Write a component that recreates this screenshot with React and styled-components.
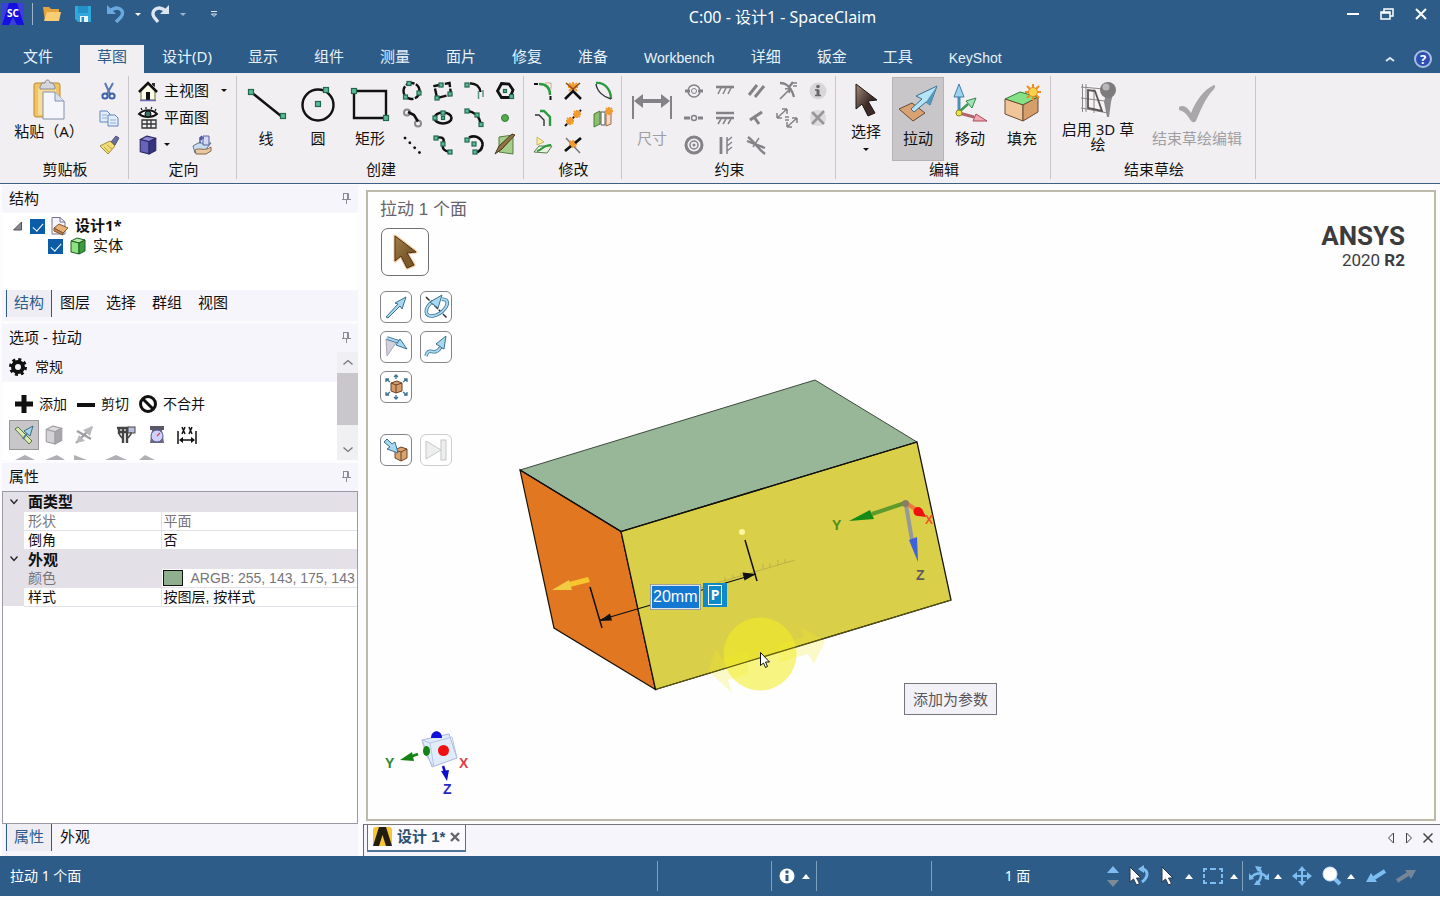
import React from "react";
import styled, { createGlobalStyle } from "styled-components";

const BLUE = "#2d5c88";
const PANEL = "#f7f5fc";
const RIBBON = "#f1eff2";

const GlobalStyle = createGlobalStyle`
  * { box-sizing: border-box; }
  body {
    margin: 0;
    background: #fcfcfe;
    color: #111;
    font-family: "Noto Sans", "Noto Sans CJK SC", sans-serif;
    font-size: 15px;
    line-height: 18px;
  }
  button {
    font: inherit;
    color: inherit;
    background: none;
    border: 0;
    padding: 0;
    display: flex;
    align-items: center;
    justify-content: center;
    white-space: nowrap;
  }
  svg { display: block; flex: none; overflow: visible; }
`;

/* ---------- icon drawing helpers ---------- */

const Icon = ({ w = 24, h = w, children, ...rest }) => (
  <svg width={w} height={h} viewBox={`0 0 ${w} ${h}`} fill="none" aria-hidden="true" {...rest}>
    {children}
  </svg>
);

const Handle = ({ x, y, s = 4 }) => (
  <rect x={x - s / 2} y={y - s / 2} width={s} height={s} fill="#5fb896" stroke="#20694f" strokeWidth="1.2" />
);

const Ink = ({ d, w = 2, c = "#111", ...rest }) => <path d={d} stroke={c} strokeWidth={w} {...rest} />;

const Caret = ({ up, color = "#111", w = 8, h = 4 }) => (
  <Icon w={w} h={h}>
    <path d={up ? `M0 ${h}L${w / 2} 0L${w} ${h}Z` : `M0 0H${w}L${w / 2} ${h}Z`} fill={color} />
  </Icon>
);

const PushPin = () => (
  <Icon w={10} h={12}>
    <Ink w={1} c="#8c8a92" d="M2.5 1V7M2.5 1.5H7.5V7.5M6.5 1.5V7.5M1 7.5H10M5.5 7.5V12" />
  </Icon>
);

const createIcons = [
  ["三点圆", <Icon><circle cx="11.5" cy="12" r="8" stroke="#111" strokeWidth="2.4" strokeDasharray="9 1.5" /><Handle x={9} y={4.5} /><Handle x={19} y={14} /><Handle x={5.5} y={18} /></Icon>],
  ["三点矩形", <Icon><Ink d="M3.5 7L18.5 4L20 15.500L6 19Z" w={2.400} strokeDasharray="9 1.500" /><Handle x={10} y={6} /><Handle x={6} y={19} /><Handle x={19} y={15} /></Icon>],
  ["切线弧", <Icon><Ink d="M8 4.500C14 4 18 8 18.500 13" w={2.400} /><Handle x={5} y={6} /><Ink c="#5c9782" w={1.500} d="M16.500 12V20M21 11V18" /></Icon>],
  ["多边形", <Icon><Ink d="M8.500 4.500L16 5L20 11L17 18.500H8.500L4.500 12Z" w={2.800} /><Handle x={12} y={12} s={3} /><Handle x={18.5} y={17.5} /></Icon>],
  ["切线", <Icon><circle cx="7" cy="6.500" r="3" stroke="#8a8a8a" strokeWidth="2" /><circle cx="18" cy="17.500" r="3" stroke="#8a8a8a" strokeWidth="2" /><Ink d="M8 6L14 9L18 15.500" w={2.600} /></Icon>],
  ["椭圆", <Icon><ellipse cx="12" cy="12" rx="8.500" ry="5.500" stroke="#111" strokeWidth="2.600" /><Handle x={12} y={12} s={3} /><Handle x={12} y={7} /><Handle x={4} y={12} /></Icon>],
  ["三点弧", <Icon><Ink d="M6 5C13 6 17.500 11 18.500 17" w={2.400} strokeDasharray="8 2" /><Handle x={5} y={5} /><Handle x={15} y={9} /><Handle x={19} y={18.500} /></Icon>],
  ["点", <Icon><circle cx="12" cy="12" r="3.500" fill="#55ab4c" stroke="#327d3b" /></Icon>],
  ["构造线", <Icon><Ink d="M5 5L20 20" w={2.800} strokeDasharray="0.1 6.700" strokeLinecap="round" /></Icon>],
  ["样条曲线", <Icon><Ink d="M5 5C12 3 14 6 12 11C11 16 13 18 19 19" w={2.400} /><Handle x={5} y={5} /><Handle x={12} y={11} /><Handle x={19} y={19} /></Icon>],
  ["扫掠弧", <Icon><Ink d="M7 4.500C15 1 21 7 20.500 12C20 16 18 19 13 19.500" w={2.600} /><Handle x={5} y={7} /><Handle x={12} y={11} /><Handle x={13} y={19} /></Icon>],
  ["面曲线", <Icon><path d="M6 4L20 2V21L6 19Z" fill="#a5ce8b" stroke="#567b43" /><path d="M22 2L9 16L2 21L6 13L19 1Z" fill="#8f7246" stroke="#463920" /></Icon>],
];

const Spark = ({ x, y, r = 4 }) => (
  <path
    d={`M${x - r} ${y}H${x + r}M${x} ${y - r}V${y + r}M${x - r + 1} ${y - r + 1}L${x + r - 1} ${y + r - 1}M${x - r + 1} ${y + r - 1}L${x + r - 1} ${y - r + 1}`}
    stroke="#f29b2e"
    strokeWidth="2"
  />
);

const modifyIcons = [
  ["圆角", <Icon><Ink c="#2b9a3e" w={2.400} d="M8 5C15 5 19 9 19 16" /><Ink d="M3 5H7M19.500 17V21" w={2} /><Ink c="#c9a793" w={1} d="M14 4H20V10" /></Icon>],
  ["修剪", <Icon><Spark x={12} y={8} r={5} /><Ink c="#8c4a18" w={1.500} d="M5 4L12 10L19 4" /><Ink d="M4 20L12 12L20 20" w={2.600} /></Icon>],
  ["弯曲", <Icon><Ink c="#2b9a3e" w={2.400} d="M5 4C14 3 20 11 20 20" /><Ink c="#333" w={1.400} d="M5 5C6 12 12 18 20 20" /></Icon>],
  ["偏移", <Icon><Ink c="#2b9a3e" w={2.400} d="M9 5H13L19 11V20" /><Ink c="#333" w={1.400} d="M4 9H8L13 14V20" /></Icon>],
  ["拆分", <Icon><Ink d="M4 20L20 4" w={2} /><Spark x={9} y={15} r={4} /><Spark x={16} y={8} r={4} /></Icon>],
  ["创建折角", <Icon><path d="M3 8L9 5V18L3 21Z" fill="#8bc16b" stroke="#4b7d37" /><path d="M10 6H14V19H10Z" fill="#fff" stroke="#555" /><path d="M15 8L20 6V18L15 20Z" fill="#f4d8c0" stroke="#9c6b45" /><Spark x={18} y={5} r={4} /></Icon>],
  ["投影到草图", <Icon><path d="M3 19L8 13H21L16 20Z" fill="#e9f3df" stroke="#5a7a50" /><Ink c="#2b9a3e" w={2.200} d="M6 18C12 17 11 12 20 12" /><path d="M6 4V12L13 9Z" fill="#fbf0a7" stroke="#c9b65b" /></Icon>],
  ["分割", <Icon><Ink c="#7b7b7b" w={1.600} d="M5 5L19 20" /><Spark x={12} y={11} r={4} /><Ink d="M4 18L10 13M14 10L20 5" w={2.800} /></Icon>],
];

const G = "#848286";
const constraintIcons = [
  ["重合", <Icon><circle cx="12" cy="12" r="6" stroke={G} strokeWidth="1.500" /><circle cx="12" cy="12" r="2.500" stroke={G} /><Ink c={G} w={3} d="M3 12H8M16 12H21" /></Icon>],
  ["固定", <Icon><Ink c={G} w={2.600} d="M3 8H21" /><Ink c={G} w={1.500} d="M8 9L5 15M13 9L10 15M18 9L15 15" /></Icon>],
  ["平行", <Icon><Ink c={G} w={3} d="M5 16L13 6M11 18L20 7" /></Icon>],
  ["相等半径", <Icon><Ink c={G} w={1.700} d="M5 20L16 9M16 9L10 10M16 9L14 14M17 4H22M18 7H22" /><Ink c={G} w={2.400} d="M5 4C12 4 17 10 19 18M14 8L18 3" /></Icon>],
  ["信息", <Icon><circle cx="12" cy="12" r="8.500" fill="#d8d6d8" /><Ink c="#69676a" w={3} d="M12 10.500V16" /><circle cx="12" cy="7.500" r="1.800" fill="#69676a" /><Ink c="#69676a" w={1.400} d="M9 16.500H15M9 11H12" /></Icon>],
  ["中点", <Icon><circle cx="12" cy="12" r="2.500" stroke={G} strokeWidth="1.500" /><Ink c={G} w={2.800} d="M2 12H8M16 12H21" /></Icon>],
  ["水平", <Icon><Ink c={G} w={2.600} d="M3 7H21M3 12H21" /><Ink c={G} w={1.500} d="M8 13L5 18M13 13L10 18M18 13L15 18" /></Icon>],
  ["垂直", <Icon><Ink c={G} w={3} d="M6 14L18 6M10 11L15 18" /></Icon>],
  ["相等距离", <Icon><Ink c={G} w={1.500} d="M2 12L12 3M12 3H7M12 3V8M2 12V7M2 12H7M12 21L22 12M22 12H17M22 12V17M12 21V16M12 21H17M10 11H14M10 14H14" /></Icon>],
  ["删除约束", <Icon><circle cx="12" cy="12" r="8" fill="#dddbdd" /><Ink c="#98969a" w={2.600} d="M6 6L18 18M18 5L6 18" /></Icon>],
  ["同心", <Icon><circle cx="12" cy="12" r="8" stroke={G} strokeWidth="3" /><circle cx="12" cy="12" r="4" stroke={G} strokeWidth="1.500" /><circle cx="12" cy="12" r="1.500" fill={G} /></Icon>],
  ["竖直", <Icon><Ink c={G} w={2.800} d="M8 4V21" /><Ink c={G} w={1.500} d="M14 4V21M19 4L14 8M19 9L14 13M19 14L14 18" /></Icon>],
  ["相切", <Icon><Ink c={G} w={2.400} d="M3 8L21 15M4 4C10 8 13 15 21 21" /><Ink c={G} w={1.400} d="M15 5L9 14" /></Icon>],
];

const PasteIcon = () => (
  <Icon w={36} h={42}>
    <rect x="3" y="4" width="26" height="34" rx="2" fill="#f1c463" stroke="#bb8b35" />
    <rect x="7" y="9" width="18" height="27" fill="#f8dc94" />
    <path d="M9 8L11 4H14C14 0 19 0 19 4H22L24 8V10H9Z" fill="#d5d6dc" stroke="#888a94" />
    <path d="M12 13H24L33 22V40H12Z" fill="#f4f6fc" stroke="#8390ad" />
    <path d="M24 13V22H33" fill="#d9e0ef" stroke="#8390ad" />
  </Icon>
);

const CutIcon = () => (
  <Icon w={20}>
    <Ink c="#5a78ac" w={2} d="M6 2L11 13M14 2L8 13" />
    <circle cx="6" cy="15" r="2.600" stroke="#3b62a8" strokeWidth="2" />
    <circle cx="13" cy="15" r="2.600" stroke="#3b62a8" strokeWidth="2" />
  </Icon>
);

const CopyIcon = () => (
  <Icon w={20}>
    <path d="M1 3H8L11 6V14H1Z" fill="#e4eefb" stroke="#6185be" />
    <path d="M9 7H16L19 10V18H9Z" fill="#e4eefb" stroke="#6185be" />
    <Ink c="#8fabd8" w={1} d="M3 7H8M3 10H8M11 12H17M11 15H17" />
  </Icon>
);

const BrushIcon = () => (
  <Icon w={20}>
    <path d="M12 7L17 1L20 3L16 10Z" fill="#6b6f9b" stroke="#4d5078" />
    <path d="M1 11L11 6L16 11L9 19Z" fill="#f0dd77" stroke="#9d8d3c" />
    <Ink c="#b8a548" w={1} d="M5 12L10 17M8 10L13 14" />
  </Icon>
);

const HomeIcon = () => (
  <Icon w={20}>
    <path d="M3 10L10 3L17 10V19H3Z" fill="#fbfbe9" stroke="#6f6a3c" />
    <Ink d="M1 11L10 2L19 11" w={2.600} />
    <rect x="8" y="11" width="4" height="8" fill="#111" />
    <path d="M14 2H17V6L14 4Z" fill="#333" />
    <Ink c="#6c6bbb" w={1.500} d="M2 19.500H18" />
  </Icon>
);

const PlanIcon = () => (
  <Icon w={20}>
    <Ink d="M1 6C6 1 14 1 19 6C14 10 6 10 1 6Z" w={1.800} fill="#fff" />
    <circle cx="10" cy="6" r="3" fill="#3f6f68" stroke="#111" />
    <Ink d="M4 2L3 0M8 1L8 -1M13 1L14 -1M17 3L18 1" w={1.200} />
    <Ink c="#333" w={1.300} d="M4 12H18V20H4ZM4 16H18M9 12V20M13 12V20" />
  </Icon>
);

const Box = ({ c1, c2, c3, s, w = 18 }) => (
  <svg width={w} height={w} viewBox="0 0 18 18" aria-hidden="true">
    <path d="M2 4L8 1L16 3L10 6Z" fill={c1} stroke={s} strokeLinejoin="round" />
    <path d="M2 4L10 6V17L2 15Z" fill={c2} stroke={s} strokeLinejoin="round" />
    <path d="M10 6L16 3V14L10 17Z" fill={c3} stroke={s} strokeLinejoin="round" />
  </svg>
);

const ReflectIcon = () => (
  <Icon w={20}>
    <path d="M1 11L6 8H19L15 13V18H3Z" fill="#c9dcee" stroke="#5d7890" />
    <path d="M3 15C8 12 12 17 19 12V16L14 19H4Z" fill="#e9c8a0" stroke="#87674a" />
    <path d="M11 1H17V10H11Z" fill="#d5d8f4" stroke="#5960a3" />
    <Ink c="#4e57a0" w={1.500} d="M8 8V3H12M10 1L8 3L10 5" />
  </Icon>
);

const LineIcon = () => (
  <Icon w={40} h={36}><Ink d="M5 7L35 31" w={2.400} /><Handle x={5} y={7} s={5} /><Handle x={37} y={31} s={5} /></Icon>
);
const CircleIcon = () => (
  <Icon w={40} h={36}><circle cx="20" cy="20" r="15.500" stroke="#111" strokeWidth="2.400" /><Handle x={20} y={19} s={5} /><Handle x={28} y={5} s={5} /></Icon>
);
const RectIcon = () => (
  <Icon w={40} h={36}><Ink d="M4 6H36V33H4Z" w={2.400} /><Handle x={4} y={6} s={5} /><Handle x={36} y={33} s={5} /></Icon>
);
const DimensionIcon = () => (
  <Icon w={42} h={36}>
    <Ink c={G} w={2} d="M2 11V34M40 11V34" />
    <Ink c={G} w={4} d="M8 16H34" />
    <path d="M3 16L12 9V23ZM39 16L30 9V23Z" fill={G} />
  </Icon>
);
const ArrowCursor = ({ w = 36, dark, light, edge, glow }) => (
  <svg width={w} height={w} viewBox="0 0 36 36" aria-hidden="true">
    <defs>
      <linearGradient id={`cur${dark.slice(1)}`} x1="0" y1="0" x2="1" y2="1">
        <stop offset="0" stopColor={light} />
        <stop offset="0.6" stopColor={dark} />
      </linearGradient>
    </defs>
    {glow && <path d="M8 2V27L14 22L20 34L27 31L20 19L29 18Z" stroke={glow} strokeWidth="3" strokeLinejoin="round" fill="none" />}
    <path d="M8 2V27L14 22L20 34L27 31L20 19L29 18Z" fill={`url(#cur${dark.slice(1)})`} stroke={edge} strokeLinejoin="round" />
  </svg>
);
const PullIcon = () => (
  <Icon w={42} h={40}>
    <path d="M2 26L15 20L28 30L16 38Z" fill="#d8a273" stroke="#6b4a31" />
    <path d="M14 26L25 16L19 13L40 3L33 22L29 19L17 29Z" fill="#b6e3f6" stroke="#3c6f8c" strokeLinejoin="round" />
    <path d="M40 3L29 19L33 22Z" fill="#5499bb" />
  </Icon>
);
const MoveIcon = () => (
  <Icon w={36} h={40}>
    <Ink c="#4c8fb4" w={3} d="M7 29V12" />
    <path d="M7 1L12 14H2Z" fill="#9ed2ef" stroke="#3c7ea5" />
    <Ink c="#3a9a55" w={2.400} d="M7 29L16 21" />
    <path d="M24 15L20 25L14 18Z" fill="#a6e2b5" stroke="#2e8a47" />
    <Ink c="#b2646e" w={3} d="M7 30L22 34" />
    <path d="M35 38L21 38L24 31Z" fill="#f2a8b0" stroke="#a84a56" />
    <circle cx="7" cy="30" r="3" fill="#e9e34c" stroke="#8a8420" />
  </Icon>
);
const FillIcon = () => (
  <Icon w={38} h={40}>
    <path d="M2 16L17 9L35 14L20 22Z" fill="#86e086" stroke="#2f7a35" strokeLinejoin="round" />
    <path d="M2 16L20 22V38L2 31Z" fill="#f0c59a" stroke="#6c4c33" strokeLinejoin="round" />
    <path d="M20 22L35 14V29L20 38Z" fill="#d59e6b" stroke="#6c4c33" strokeLinejoin="round" />
    <Ink c="#f08c1c" w={2} d="M30 1V17M22 9H38M24 3L36 15M36 3L24 15" />
    <circle cx="30" cy="9" r="4.500" fill="#fbd24a" stroke="#e68a1c" />
  </Icon>
);
const Sketch3DIcon = () => (
  <Icon w={36} h={38}>
    <path d="M2 3L23 6L28 36L3 31Z" fill="#f6f3f4" />
    <Ink c="#8a8586" w={1} d="M2.500 3V31M6 3V31M1 6L24 8M1 27L28 32M1 17L25 20M14 8V32" />
    <Ink c="#5a5455" w={1.800} d="M8 9L8 27L22 30L15 10Z" />
    <path d="M26 13L24 21L27 36L29 36L31 21L33 13Z" fill="#8b898a" />
    <circle cx="28" cy="9" r="8" fill="#7d7b7c" />
    <circle cx="26" cy="6" r="3.500" fill="#b9b7b8" />
  </Icon>
);
const CheckIcon = () => (
  <Icon w={40} h={40}>
    <path d="M2 24C7 21 11 25 14 30C19 18 26 7 37 2C39 2 38 5 37 6C29 14 24 26 19 38C16 41 14 38 12 35C9 30 6 28 2 27Z" fill="#a9a7aa" />
  </Icon>
);

/* ---------- title bar ---------- */

const Page = styled.div`
  min-height: 100vh;
  display: flex;
  flex-direction: column;
`;

const TitleBar = styled.header`
  display: flex;
  align-items: flex-start;
  height: 45px;
  background: ${BLUE};
  color: #fff;
`;

const QuickAccess = styled.div`
  display: flex;
  align-items: center;
  height: 28px;
  padding-left: 2px;
`;

const QuickButton = styled.button`
  width: ${(p) => p.$w}px;
  height: 28px;
`;

const VRule = styled.span`
  width: 1px;
  height: ${(p) => p.$h}px;
  margin: 0 ${(p) => p.$m || 0}px;
  background: ${(p) => p.$c || "#7f9fbd"};
`;

const WindowTitle = styled.h1`
  flex: 1;
  margin: 0;
  padding-right: 8px;
  font-size: 16px;
  font-weight: 400;
  line-height: 34px;
  text-align: center;
`;

const WindowButton = styled.button`
  width: 34px;
  height: 28px;
`;

const WindowButtons = styled.div`
  display: flex;
  padding-right: 2px;
`;

const TabStrip = styled.nav`
  display: flex;
  height: 28px;
  padding-left: 5px;
  background: ${BLUE};
  color: #e8f2fb;
`;

const RibbonTab = styled.button`
  height: 28px;
  padding: 0 ${(p) => (p.$active ? 17 : 18)}px ${(p) => (p.$latin ? 2 : 6)}px;
  margin-left: ${(p) => (p.$active ? 9 : 0)}px;
  background: ${(p) => (p.$active ? RIBBON : "transparent")};
  color: ${(p) => (p.$active ? BLUE : "inherit")};
  font-family: ${(p) => (p.$latin ? '"Liberation Sans", sans-serif' : "inherit")};
  font-size: ${(p) => (p.$latin ? 14 : 15)}px;
`;

const TabEnd = styled.div`
  display: flex;
  align-items: center;
  gap: 20px;
  margin-left: auto;
  padding-right: 8px;
`;

const tabs = ["文件", "草图", "设计(D)", "显示", "组件", "测量", "面片", "修复", "准备", "Workbench", "详细", "钣金", "工具", "KeyShot"];

const Header = () => (
  <>
    <TitleBar>
      <QuickAccess>
        <Icon w={22}>
          <rect width="22" height="22" fill="#3b41d6" />
          <path d="M7 0H15L22 22H15L11 14L7 22H0Z" fill="#1510e0" />
          <text x="11" y="14" textAnchor="middle" fontSize="10" fontWeight="700" fill="#fff">SC</text>
        </Icon>
        <VRule $h={22} $m={8} $c="#9db4ca" />
        <QuickButton $w={22} aria-label="打开">
          <Icon w={20} h={18}>
            <path d="M1 2H7L9 4H17V16H3Z" fill="#e5a33c" />
            <path d="M5 7H19L17 16H2Z" fill="#f9cd74" />
          </Icon>
        </QuickButton>
        <QuickButton $w={40} aria-label="保存">
          <Icon w={18}>
            <path d="M1 1H17V17H4L1 14Z" fill="#2fa8dc" />
            <path d="M4 1H14V8H4Z" fill="#2391c7" />
            <path d="M6 11H14V17H6Z" fill="#eaf7fd" />
            <path d="M7.500 12H10V17H7.500Z" fill="#2391c7" />
          </Icon>
        </QuickButton>
        <QuickButton $w={26} aria-label="撤消">
          <Icon w={20}><Ink c="#6aa9de" w={3.400} d="M4 7C12 0 20 7 15 13L10 18" /><path d="M1 1V10H10Z" fill="#6aa9de" /></Icon>
        </QuickButton>
        <QuickButton $w={18} aria-label="撤消列表"><Caret color="#fff" w={6} h={3} /></QuickButton>
        <QuickButton $w={28} aria-label="恢复">
          <Icon w={20}><Ink c="#dbe6f1" w={3.400} d="M15 7C7 0 -1 7 3 13L7 18" /><path d="M18 1V10H9Z" fill="#dbe6f1" /></Icon>
        </QuickButton>
        <QuickButton $w={16} aria-label="恢复列表"><Caret color="#9fb5cc" w={6} h={3} /></QuickButton>
        <QuickButton $w={46} aria-label="自定义快速访问工具栏">
          <Icon w={8}><Ink c="#dbe6f1" w={1} d="M1 1.500H7M1.500 4L4 6.500L6.500 4Z" /></Icon>
        </QuickButton>
      </QuickAccess>
      <WindowTitle>C:00 - 设计1 - SpaceClaim</WindowTitle>
      <WindowButtons>
        <WindowButton aria-label="最小化"><Icon w={14}><Ink c="#fff" w={2} d="M1 7H13" /></Icon></WindowButton>
        <WindowButton aria-label="还原"><Icon w={14}><Ink c="#fff" w={1.500} d="M4 5V2H13V9H10M1 5H10V12H1ZM1 6H10" /></Icon></WindowButton>
        <WindowButton aria-label="关闭"><Icon w={14}><Ink c="#fff" w={2} d="M2 2L12 12M12 2L2 12" /></Icon></WindowButton>
      </WindowButtons>
    </TitleBar>
    <TabStrip>
      {tabs.map((t) => (
        <RibbonTab key={t} $active={t === "草图"} $latin={t === "Workbench" || t === "KeyShot"}>{t}</RibbonTab>
      ))}
      <TabEnd>
        <button aria-label="折叠功能区"><Icon w={8} h={6}><Ink c="#dbe6f1" w={2} d="M0 5L4 2L8 5" /></Icon></button>
        <button aria-label="帮助">
          <Icon w={18}>
            <circle cx="9" cy="9" r="8" fill="#2c4fb4" stroke="#a9bfe0" strokeWidth="2" />
            <text x="9" y="14" textAnchor="middle" fontSize="13" fontWeight="700" fill="#fff">?</text>
          </Icon>
        </button>
      </TabEnd>
    </TabStrip>
  </>
);

/* ---------- ribbon ---------- */

const RibbonBar = styled.div`
  display: flex;
  padding: 3px 0 4px;
  background: ${RIBBON};
  border-bottom: 1px solid #3c6186;
`;

const Group = styled.section`
  flex: none;
  width: ${(p) => p.$w}px;
  padding-bottom: 1px;
  border-right: 1px solid #c9c6cb;
`;

const GroupBody = styled.div`
  display: flex;
  height: 84px;
  padding: 1px ${(p) => p.$pad || 0}px 0;
`;

const GroupLabel = styled.h2`
  margin: 0;
  padding-left: 2px;
  font-size: 15px;
  font-weight: 400;
  line-height: 18px;
  text-align: center;
`;

const BigButton = styled.button`
  flex-direction: column;
  justify-content: flex-start;
  flex: none;
  width: ${(p) => p.$w || 52}px;
  height: 84px;
  background: ${(p) => (p.$active ? "#c8c6c9" : "transparent")};
  box-shadow: ${(p) => (p.$active ? "inset 0 0 0 1px #b5b3b7" : "none")};
  color: ${(p) => (p.disabled ? "#a09ea3" : "#111")};
`;

const BigIcon = styled.span`
  display: flex;
  align-items: center;
  height: ${(p) => (p.$short ? 45 : 52)}px;
`;

const BigText = styled.span`
  line-height: ${(p) => (p.$tight ? 15 : 18)}px;
  white-space: pre-line;
`;

const CaretBox = styled.span`
  padding-top: 8px;
`;

const IconGrid = styled.div`
  display: grid;
  grid-template-columns: repeat(${(p) => p.$cols}, ${(p) => p.$cell || 31}px);
  grid-auto-rows: 27px;
  justify-items: center;
  align-items: center;
  align-content: start;
`;

const OrientRow = styled.div`
  display: flex;
  align-items: center;
  gap: 6px;
  height: 27px;
`;

const OrientRows = styled.div`
  width: 90px;
  flex: 1;
`;

const OrientText = styled.span`
  line-height: 16px;
  padding-bottom: 2px;
`;

const Spring = styled.span`
  flex: 1;
`;

const IconCells = ({ items, disabled }) =>
  items.map(([name, icon]) => <button key={name} aria-label={name} disabled={disabled}>{icon}</button>);

const Ribbon = () => (
  <RibbonBar>
    <Group $w={129}>
      <GroupBody>
        <BigButton $w={98}><BigIcon $short><PasteIcon /></BigIcon><BigText>粘贴（A）</BigText></BigButton>
        <IconGrid $cols={1} $cell={22}>
          <button aria-label="剪切到剪贴板"><CutIcon /></button>
          <button aria-label="复制"><CopyIcon /></button>
          <button aria-label="格式刷"><BrushIcon /></button>
        </IconGrid>
      </GroupBody>
      <GroupLabel>剪贴板</GroupLabel>
    </Group>
    <Group $w={108}>
      <GroupBody $pad={9}>
        <OrientRows>
          <OrientRow><HomeIcon /><OrientText>主视图</OrientText><Spring /><Caret w={6} h={3} /></OrientRow>
          <OrientRow><PlanIcon /><OrientText>平面图</OrientText></OrientRow>
          <OrientRow>
            <Box c1="#8b87d8" c2="#6763bd" c3="#37347f" s="#2b2860" w={20} />
            <Caret w={6} h={3} />
            <Spring />
            <ReflectIcon />
            <Spring />
          </OrientRow>
        </OrientRows>
      </GroupBody>
      <GroupLabel>定向</GroupLabel>
    </Group>
    <Group $w={287}>
      <GroupBody $pad={3}>
        <BigButton><BigIcon><LineIcon /></BigIcon><BigText>线</BigText></BigButton>
        <BigButton><BigIcon><CircleIcon /></BigIcon><BigText>圆</BigText></BigButton>
        <BigButton><BigIcon><RectIcon /></BigIcon><BigText>矩形</BigText></BigButton>
        <IconGrid $cols={4}><IconCells items={createIcons} /></IconGrid>
      </GroupBody>
      <GroupLabel>创建</GroupLabel>
    </Group>
    <Group $w={98}>
      <GroupBody $pad={4}>
        <IconGrid $cols={3} $cell={30}><IconCells items={modifyIcons} /></IconGrid>
      </GroupBody>
      <GroupLabel>修改</GroupLabel>
    </Group>
    <Group $w={214}>
      <GroupBody $pad={4}>
        <BigButton disabled><BigIcon><DimensionIcon /></BigIcon><BigText>尺寸</BigText></BigButton>
        <IconGrid $cols={5}><IconCells items={constraintIcons} disabled /></IconGrid>
      </GroupBody>
      <GroupLabel>约束</GroupLabel>
    </Group>
    <Group $w={215}>
      <GroupBody $pad={4}>
        <BigButton>
          <BigIcon $short><ArrowCursor dark="#3b2a25" light="#a58c80" edge="#1d1412" /></BigIcon>
          <BigText>选择</BigText>
          <CaretBox><Caret w={6} h={3} /></CaretBox>
        </BigButton>
        <BigButton $active><BigIcon><PullIcon /></BigIcon><BigText>拉动</BigText></BigButton>
        <BigButton><BigIcon><MoveIcon /></BigIcon><BigText>移动</BigText></BigButton>
        <BigButton><BigIcon><FillIcon /></BigIcon><BigText>填充</BigText></BigButton>
      </GroupBody>
      <GroupLabel>编辑</GroupLabel>
    </Group>
    <Group $w={205}>
      <GroupBody>
        <BigButton $w={94}><BigIcon $short><Sketch3DIcon /></BigIcon><BigText $tight>{"启用 3D 草\n绘"}</BigText></BigButton>
        <BigButton $w={104} disabled><BigIcon><CheckIcon /></BigIcon><BigText>结束草绘编辑</BigText></BigButton>
      </GroupBody>
      <GroupLabel>结束草绘</GroupLabel>
    </Group>
  </RibbonBar>
);

/* ---------- side panels ---------- */

const Workspace = styled.main`
  display: flex;
  flex: 1;
`;

const Sidebar = styled.aside`
  display: flex;
  flex-direction: column;
  flex: none;
  width: 363px;
  padding: 1px 5px 0 2px;
`;

const PanelHeader = styled.div`
  display: flex;
  align-items: center;
  justify-content: space-between;
  height: 28px;
  padding: 0 7px 2px;
  background: ${PANEL};
`;

const PanelTitle = styled.h2`
  margin: 0;
  font-size: 15px;
  font-weight: 400;
  line-height: 18px;
`;

const PanelTabs = styled.div`
  display: flex;
  height: ${(p) => (p.$last ? 32 : 31)}px;
  padding-left: 4px;
  background: ${PANEL};
  margin-bottom: ${(p) => (p.$last ? 0 : 3)}px;
`;

const PanelTab = styled.button`
  height: 27px;
  width: 46px;
  padding-bottom: 4px;
  background: ${(p) => (p.$active ? "#eeedf3" : "transparent")};
  border: solid ${(p) => (p.$active ? BLUE : "transparent")};
  border-width: 0 1px;
  color: ${(p) => (p.$active ? BLUE : "#111")};
`;

const Tree = styled.div`
  height: 77px;
  padding-top: 3px;
  background: #fff;
`;

const TreeRow = styled.div`
  display: flex;
  align-items: center;
  gap: 6px;
  height: 20px;
  padding-left: ${(p) => p.$indent}px;
`;

const TreeText = styled.label`
  padding-bottom: 2px;
  font-weight: ${(p) => (p.$bold ? 700 : 400)};
`;

const Check = styled.input`
  appearance: none;
  position: relative;
  width: 15px;
  height: 15px;
  margin: 0;
  background: #0d5ca8;
  &:checked::after {
    content: "";
    position: absolute;
    left: 5px;
    top: 2px;
    width: 5px;
    height: 9px;
    border: solid #fff;
    border-width: 0 1px 1px 0;
    transform: rotate(42deg);
  }
`;

const Options = styled.div`
  display: flex;
  height: 108px;
  margin-bottom: 3px;
  overflow: hidden;
`;

const OptionsBody = styled.div`
  flex: 1;
  height: 108px;
  overflow: hidden;
  background: #fff;
  font-size: 14px;
`;

const SectionBar = styled.div`
  display: flex;
  align-items: center;
  gap: 8px;
  height: 30px;
  padding-left: 7px;
  background: ${PANEL};
`;

const ModeRow = styled.div`
  display: flex;
  gap: 10px;
  height: 30px;
  margin-top: 8px;
  padding-left: 13px;
`;

const ModeButton = styled.button`
  gap: 6px;
  height: 28px;
`;

const ToolRow = styled.div`
  display: flex;
  padding-left: 7px;
`;

const ToolButton = styled.button`
  width: 30px;
  height: 30px;
  margin-right: ${(p) => (p.$apart ? 13 : 0)}px;
  background: ${(p) => (p.$active ? "#c8c6c9" : "transparent")};
  box-shadow: ${(p) => (p.$active ? "inset 0 0 0 1px #98969b" : "none")};
`;

const MoreToolsRow = styled.div`
  padding: 4px 0 0 7px;
`;

const ScrollTrack = styled.div`
  display: flex;
  flex-direction: column;
  width: 21px;
  background: #f0eff2;
`;

const ScrollButton = styled.button`
  height: 21px;
`;

const ScrollThumb = styled.div`
  height: 52px;
  margin-bottom: auto;
  background: #c9c7cb;
`;

const PropertyBox = styled.div`
  flex: 1;
  background: #fff;
  border: 1px solid #9b99a1;
  overflow: hidden;
`;

const PropertyTable = styled.table`
  width: 100%;
  table-layout: fixed;
  border-collapse: collapse;
  font-size: 14px;
`;

const GutterCol = styled.col`
  width: 21px;
`;

const NameCol = styled.col`
  width: 137px;
`;

const Gutter = styled.td`
  padding: 0;
  background: #e3e0e7;
`;

const GutterCell = styled.div`
  display: flex;
  align-items: center;
  justify-content: center;
`;

const Category = styled.th`
  height: 19px;
  padding: 0 4px;
  background: #e3e0e7;
  font-size: 15px;
  font-weight: 700;
  text-align: left;
`;

const Name = styled.th`
  height: 19px;
  padding: 0 4px;
  border: 1px solid #e3e0e7;
  border-left: 0;
  background: ${(p) => (p.$selected ? "#e3e0e7" : "#fff")};
  color: ${(p) => (p.$muted ? "#77757b" : "#111")};
  font-weight: 400;
  text-align: left;
`;

const Value = styled.td`
  height: 19px;
  padding: 0 2px;
  border: 1px solid #e3e0e7;
  border-right: 0;
  color: ${(p) => (p.$muted ? "#77757b" : "#111")};
  font-family: "Liberation Sans", "Noto Sans CJK SC", sans-serif;
  white-space: nowrap;
  overflow: hidden;
`;

const ColourValue = styled.div`
  display: flex;
  align-items: center;
  gap: 8px;
  height: 18px;
`;

const Swatch = styled.span`
  flex: none;
  width: 20px;
  height: 16px;
  margin-left: -1px;
  background: #8faf8f;
  border: 1px solid #111;
`;

const Chevron = ({ up, c = "#222", w = 8 }) => (
  <Icon w={w} h={5}><Ink c={c} w={1.300} d={up ? `M0.500 4.500L${w / 2} 0.500L${w - 0.500} 4.500` : `M0.500 0.500L${w / 2} 4.500L${w - 0.500} 0.500`} /></Icon>
);

const PanelHead = ({ title }) => (
  <PanelHeader>
    <PanelTitle>{title}</PanelTitle>
    <button aria-label="自动隐藏"><PushPin /></button>
  </PanelHeader>
);

const CategoryRow = ({ title }) => (
  <tr>
    <Gutter><GutterCell><Chevron /></GutterCell></Gutter>
    <Category colSpan={2}>{title}</Category>
  </tr>
);

const PropertyRow = ({ name, children, muted, selected }) => (
  <tr>
    <Gutter />
    <Name scope="row" $muted={muted} $selected={selected}>{name}</Name>
    <Value $muted={muted}>{children}</Value>
  </tr>
);

const MoreTools = () => (
  <Icon w={160} h={8}>
    <path d="M6 6L16 1L26 6ZM36 6L48 1L56 6ZM65 6V1L78 6ZM96 6L107 1L118 6ZM130 6L136 1L146 6Z" fill="#b1afb4" />
  </Icon>
);

const SidePanels = () => (
  <Sidebar>
    <PanelHead title="结构" />
    <Tree>
      <TreeRow $indent={10}>
        <Icon w={12}><path d="M1.500 10H9.500V2Z" fill="#8b8990" stroke="#55535a" /></Icon>
        <Check type="checkbox" id="node-design" defaultChecked />
        <Icon w={18}>
          <path d="M1 0.500H9L14 5V17H1Z" fill="#f5f3fb" stroke="#77748e" />
          <path d="M9 0.500V5H14" stroke="#77748e" />
          <path d="M3 11L8 7L17 11L12 16Z" fill="#e7b277" stroke="#82552c" />
          <path d="M3 11V14L12 18V16Z" fill="#bd8550" stroke="#82552c" />
        </Icon>
        <TreeText $bold htmlFor="node-design">设计1*</TreeText>
      </TreeRow>
      <TreeRow $indent={46}>
        <Check type="checkbox" id="node-solid" defaultChecked />
        <Box c1="#b2eda0" c2="#8be47f" c3="#3d9c3e" s="#1e5c25" />
        <TreeText htmlFor="node-solid">实体</TreeText>
      </TreeRow>
    </Tree>
    <PanelTabs>
      <PanelTab $active>结构</PanelTab>
      <PanelTab>图层</PanelTab>
      <PanelTab>选择</PanelTab>
      <PanelTab>群组</PanelTab>
      <PanelTab>视图</PanelTab>
    </PanelTabs>
    <PanelHead title="选项 - 拉动" />
    <Options>
      <OptionsBody>
        <SectionBar>
          <Icon w={18}>
            <circle cx="9" cy="9" r="5" stroke="#111" strokeWidth="4" />
            <circle cx="9" cy="9" r="7.500" stroke="#111" strokeWidth="3" strokeDasharray="3 2.890" />
          </Icon>
          <span>常规</span>
        </SectionBar>
        <ModeRow>
          <ModeButton><Icon w={18}><Ink w={5} d="M9 0V18M0 9H18" /></Icon>添加</ModeButton>
          <ModeButton><Icon w={18}><Ink w={4} d="M0 10H18" /></Icon>剪切</ModeButton>
          <ModeButton><Icon w={18}><circle cx="9" cy="9" r="7.500" stroke="#111" strokeWidth="3" /><Ink w={3} d="M4 4L14 14" /></Icon>不合并</ModeButton>
        </ModeRow>
        <ToolRow>
          <ToolButton $active aria-label="拉动边">
            <Icon w={20}><path d="M1 4L4 2L18 16L15 19Z" fill="#dbe9b6" stroke="#5b7838" /><Ink c="#4b7d95" w={2} d="M9 14L14 7" /><path d="M19 1L16 11L10 6Z" fill="#a7d3e6" stroke="#3e6c86" /></Icon>
          </ToolButton>
          <ToolButton disabled aria-label="复制边"><Box c1="#dddbdf" c2="#d4d2d6" c3="#a7a5aa" s="#a09ea3" w={20} /></ToolButton>
          <ToolButton $apart disabled aria-label="旋转边">
            <Icon w={20}><Ink c="#a09ea3" w={2.400} d="M2 18L18 2M3 6L17 14" /><path d="M19 1L16 11L9 5ZM2 18L5 10L11 16Z" fill="#bab8bd" /></Icon>
          </ToolButton>
          <ToolButton aria-label="标尺">
            <Icon w={20}><Ink c="#444" w={2.400} d="M0 3H12M2 3V9M6 3V18M10 3V18M1 7H11" /><rect x="11" y="2" width="7" height="6" fill="#b9bfe0" stroke="#444" /><Ink c="#444" w={1.500} d="M2 9L5 13M11 13L14 9V7" /></Icon>
          </ToolButton>
          <ToolButton aria-label="质量">
            <Icon w={20}><rect x="3" y="1" width="14" height="4" fill="#5b5865" /><path d="M5 5H15L17 18H3Z" fill="#6b6878" /><circle cx="10" cy="11" r="6" fill="#cfd0fb" stroke="#5c5a9c" /><Ink c="#d04a4a" w={1.200} d="M10 11L13 8" /></Icon>
          </ToolButton>
          <ToolButton aria-label="保持偏移">
            <Icon w={20}><Ink w={1.500} d="M1 6V19M19 6V19M3 15H17M5 2L8 9M8 2L5 9M12 2L15 9M15 2L12 9" /><path d="M2 15L6 12V18ZM18 15L14 12V18Z" fill="#111" /></Icon>
          </ToolButton>
        </ToolRow>
        <MoreToolsRow><MoreTools /></MoreToolsRow>
      </OptionsBody>
      <ScrollTrack>
        <ScrollButton aria-label="向上滚动"><Chevron up c="#77757b" w={10} /></ScrollButton>
        <ScrollThumb />
        <ScrollButton aria-label="向下滚动"><Chevron c="#77757b" w={10} /></ScrollButton>
      </ScrollTrack>
    </Options>
    <PanelHead title="属性" />
    <PropertyBox>
      <PropertyTable>
        <colgroup><GutterCol /><NameCol /><col /></colgroup>
        <tbody>
          <CategoryRow title="面类型" />
          <PropertyRow name="形状" muted>平面</PropertyRow>
          <PropertyRow name="倒角">否</PropertyRow>
          <CategoryRow title="外观" />
          <PropertyRow name="颜色" muted selected>
            <ColourValue><Swatch />ARGB: 255, 143, 175, 143</ColourValue>
          </PropertyRow>
          <PropertyRow name="样式">按图层, 按样式</PropertyRow>
        </tbody>
      </PropertyTable>
    </PropertyBox>
    <PanelTabs $last>
      <PanelTab $active>属性</PanelTab>
      <PanelTab>外观</PanelTab>
    </PanelTabs>
  </Sidebar>
);

/* ---------- design window ---------- */

const DesignArea = styled.section`
  display: flex;
  flex-direction: column;
  flex: 1;
  min-width: 0;
  padding-top: 6px;
`;

const Viewport = styled.div`
  position: relative;
  flex: 1;
  min-height: 560px;
  margin: 0 4px 3px 3px;
  padding: 6px 12px;
  background: #fefefe;
  border: 2px solid #bdb9ab;
  overflow: hidden;
`;

const Hint = styled.p`
  margin: 0 0 6px;
  color: #66646a;
  font-family: "Liberation Sans", "Noto Sans CJK SC", sans-serif;
  font-size: 17px;
  line-height: 24px;
`;

const SelectTool = styled.button`
  width: 48px;
  height: 48px;
  margin: 0 0 15px 1px;
  background: #fff;
  border: 1px solid #706e74;
  border-radius: 7px;
`;

const GuideGrid = styled.div`
  display: grid;
  grid-template-columns: 32px 32px;
  grid-auto-rows: 32px;
  gap: 8px;
  margin-bottom: ${(p) => (p.$apart ? 31 : 0)}px;
`;

const GuideTool = styled.button`
  background: #fff;
  border: 1px solid #85838a;
  border-radius: 6px;
  opacity: ${(p) => (p.disabled ? 0.4 : 1)};
`;

const Scene = styled.svg`
  position: absolute;
  left: 132px;
  top: 168px;
`;

const TriadDrawing = styled.svg`
  position: absolute;
  left: 12px;
  bottom: 19px;
`;

const Brand = styled.div`
  position: absolute;
  top: 30px;
  right: 29px;
  color: #3c3c3e;
  font-family: Roboto, "Liberation Sans", sans-serif;
  text-align: right;
`;

const BrandName = styled.div`
  font-size: 26px;
  font-weight: 700;
  line-height: 28px;
`;

const BrandVersion = styled.div`
  font-size: 17px;
  line-height: 20px;
`;

const DimensionEdit = styled.div`
  position: absolute;
  left: 282px;
  top: 391px;
  display: flex;
  align-items: flex-start;
  gap: 2px;
`;

const DimensionInput = styled.input`
  width: 51px;
  height: 26px;
  margin-top: 1px;
  padding: 0 1px;
  border: 2px solid #dfe6ef;
  outline: 1px solid #9aa39a;
  outline-offset: -1px;
  background: #1478d2;
  color: #fff;
  font-family: "Liberation Sans", sans-serif;
  font-size: 16px;
`;

const ParamButton = styled.button`
  width: 24px;
  height: 24px;
  background: #0f8ac8;
`;

const ParamMark = styled.span`
  width: 14px;
  height: 20px;
  border: 1px solid #fff;
  color: #fff;
  font-size: 14px;
  font-weight: 700;
  line-height: 18px;
`;

const ToolTip = styled.div`
  position: absolute;
  left: 536px;
  top: 491px;
  padding: 6px 8px;
  border: 1px solid #77757b;
  background: #f2f1f7;
  color: #58565c;
`;

const AxisText = styled.text`
  font-family: "Liberation Sans", sans-serif;
  font-weight: 700;
  font-size: ${(p) => p.$s || 14}px;
`;

/* Solid block with the pulled face, its dimension and the face triad. */
const Model = () => (
  <Scene width="480" height="340" viewBox="500 360 480 340">
    <path d="M520 470L815 380L917 442L621 531.500Z" fill="#98b698" stroke="#3d4a3d" />
    <path d="M520 470L621 531.500L655.500 689.500L554 628Z" fill="#e27722" stroke="#1c1205" strokeWidth="1.200" />
    <path d="M621 531.500L917 442L951 600L655.500 689.500Z" fill="#dacf48" stroke="#14140a" strokeWidth="1.300" />
    <path d="M520 470L621 531.500L917 442" stroke="#111" strokeWidth="1.300" fill="none" />
    <g fill="#f3ec27">
      <circle cx="760" cy="654" r="36.500" opacity="0.58" />
      <path d="M708 671L716 649L722 659L748 650V674L728 680L732 693Z" opacity="0.25" />
      <path d="M825 641L801 627L803 637L778 645L780 662L808 654L814 664Z" opacity="0.25" />
    </g>
    <path d="M657 689L951 600" stroke="#5c5a12" strokeWidth="1" />
    <path d="M700 588L795 560M725 580V577M733 578V575M741 576V573M763 569V564M770 567V563M778 565V560M785 563V559" stroke="#a59d4a" strokeWidth="0.800" opacity="0.7" />
    <path d="M590 587L602 628M745 540L757 581" stroke="#111" strokeWidth="1.500" />
    <path d="M600 620L756 574" stroke="#111" strokeWidth="1.300" />
    <path d="M599 621L610 613.500L612 620.500ZM756 574L742.500 572.500L744.500 580.500Z" fill="#111" />
    <circle cx="742" cy="532" r="3" fill="#fdf6a0" />
    <path d="M588 577L569 582L570 587L590 582Z" fill="#f7c62e" />
    <path d="M552 590L569 580L572 590Z" fill="#f2cb45" />
    <path d="M905 503L872 514" stroke="#5f9a2c" strokeWidth="4" />
    <path d="M849 521L870 510L874 519Z" fill="#158a15" />
    <path d="M906 505L912 540" stroke="#96989a" strokeWidth="4" />
    <path d="M918 562L909 540L917 537Z" fill="#3f62dc" />
    <path d="M906 503L918 511" stroke="#ee7a3c" strokeWidth="4" />
    <circle cx="918" cy="511.500" r="4.500" fill="#f01010" />
    <path d="M918 516L926 517L922 509Z" fill="#f01010" />
    <circle cx="905.500" cy="503.500" r="3.500" fill="#8b7d62" />
    <AxisText x="832" y="530" fill="#4d8f1f">Y</AxisText>
    <AxisText x="925" y="524" fill="#f0522a" $s={12}>X</AxisText>
    <AxisText x="916" y="580" fill="#5f5c60">Z</AxisText>
    <path d="M760.500 652.500V665.500L763.500 663L765.500 667.500L767.500 666.500L765.500 662H769.500Z" fill="#fff" stroke="#111" />
  </Scene>
);

const ViewTriad = () => (
  <TriadDrawing width="92" height="72" viewBox="380 728 92 72">
    <path d="M422 740L449 734L457 758L432 767Z" fill="#e1ecfb" stroke="#a9b7dc" />
    <path d="M422 740L430 743L434 767L426 755ZM430 743L452 737L457 758" fill="none" stroke="#b7c4e6" />
    <path d="M431 738C431 729 442 729 442 738Z" fill="#1010d8" />
    <circle cx="443.500" cy="750.500" r="5.500" fill="#ee1111" />
    <ellipse cx="426.500" cy="751" rx="3.500" ry="5" fill="#138413" />
    <path d="M418 754L410 757" stroke="#138413" strokeWidth="2.500" />
    <path d="M400 760L412 752L414 761Z" fill="#138413" />
    <path d="M443 766L445 772" stroke="#1010c8" strokeWidth="2.500" />
    <path d="M447 781L441 771L449 770Z" fill="#1010c8" />
    <AxisText x="385" y="768" fill="#2c8a36">Y</AxisText>
    <AxisText x="459" y="768" fill="#e0404a">X</AxisText>
    <AxisText x="443" y="794" fill="#2828c4">Z</AxisText>
  </TriadDrawing>
);

const LB = "#a8d8f0";
const DB = "#3b708f";
const guides = [
  ["方向", <Icon><path d="M2 22L14 9L11 8L22 2L18 14L16 11L4 23Z" fill={LB} stroke={DB} strokeLinejoin="round" /></Icon>],
  ["旋转", <Icon><Ink c="#333" w={1.500} strokeDasharray="5 1" d="M2 2L23 23" /><Ink c={DB} w={3.500} d="M9 6C-1 14 1 22 9 21C19 19 26 9 22 5L18 4" /><Ink c={LB} w={2} d="M9 6C-1 14 1 22 9 21C19 19 26 9 22 5L18 4" /><path d="M18 0L14 13L6 7Z" fill={LB} stroke={DB} /></Icon>],
  ["脱模斜度", <Icon><path d="M2 4L14 5L3 21Z" fill="#d4d1de" stroke="#aaa7b5" /><Ink c={DB} w={3.500} d="M3 3L15 7" /><Ink c={LB} w={2} d="M3 3L15 7" /><path d="M23 14L12 10L16 4Z" fill={LB} stroke={DB} /></Icon>],
  ["扫掠", <Icon><Ink c={DB} w={3.500} d="M2 21C5 10 10 23 17 12" /><Ink c={LB} w={2} d="M2 21C5 10 10 23 17 12" /><path d="M22 1L20 14L12 9Z" fill={LB} stroke={DB} /></Icon>],
  ["缩放主体", <Icon><path d="M7 8L13 6L18 8V16L12 18L7 16Z" fill="#d39c69" stroke="#6b4529" /><Ink c="#6b4529" w={1} d="M7 8L12 10L18 8M12 10V18" /><Ink c={DB} w={1.300} d="M12 4V0M10 2L12 0L14 2M19 7L23 4M23 7V4H20M19 17L23 20M23 17V20H20M12 20V24M10 22L12 24L14 22M6 17L2 20M2 17V20H5M6 7L2 4M2 7V4H5" /></Icon>],
];
const lowerGuides = [
  ["直到", <Icon><path d="M11 12L17 9L23 11V20L17 23L11 20Z" fill="#d9a36f" stroke="#6b4529" /><Ink c="#6b4529" w={1} d="M11 12L17 14L23 11M17 14V23" /><path d="M0 4L3 1L8 6L11 4L14 15L3 11L6 9Z" fill={LB} stroke={DB} /></Icon>],
];

const DocBar = styled.div`
  display: flex;
  align-items: flex-start;
  height: 32px;
  padding-left: 3px;
  background: ${PANEL};
  border-top: 1px solid #77757b;
  border-left: 1px solid #4f6f8d;
`;

const DocTab = styled.div`
  display: flex;
  align-items: center;
  gap: 5px;
  height: 27px;
  padding: 0 5px 2px;
  background: #fbfaff;
  border: solid #4f7596;
  border-width: 0 1px 2px;
  color: #2b506f;
  font-family: "Liberation Sans", "Noto Sans CJK SC", sans-serif;
`;

const DocNav = styled.div`
  display: flex;
  align-items: center;
  gap: 10px;
  height: 26px;
  margin-left: auto;
  padding-right: 7px;
`;

const Design = () => (
  <DesignArea>
    <Viewport>
      <Model />
      <Hint>拉动 1 个面</Hint>
      <SelectTool aria-label="选择"><ArrowCursor w={36} dark="#7d5a2b" light="#a27f4b" edge="#4a3214" glow="#f3c596" /></SelectTool>
      <GuideGrid $apart>
        {guides.map(([n, i]) => <GuideTool key={n} aria-label={n}>{i}</GuideTool>)}
      </GuideGrid>
      <GuideGrid>
        {lowerGuides.map(([n, i]) => <GuideTool key={n} aria-label={n}>{i}</GuideTool>)}
        <GuideTool disabled aria-label="完成拉动">
          <Icon><path d="M2 3L17 12L2 21Z" fill="#d5dad9" stroke="#777" /><rect x="17" y="2" width="5" height="20" fill="#d5dad9" stroke="#777" /></Icon>
        </GuideTool>
      </GuideGrid>
      <DimensionEdit>
        <DimensionInput aria-label="距离" defaultValue="20mm" />
        <ParamButton aria-label="创建参数"><ParamMark>P</ParamMark></ParamButton>
      </DimensionEdit>
      <ToolTip role="tooltip">添加为参数</ToolTip>
      <Brand>
        <BrandName>ANSYS</BrandName>
        <BrandVersion>2020 <b>R2</b></BrandVersion>
      </Brand>
      <ViewTriad />
    </Viewport>
    <DocBar>
      <DocTab>
        <Icon w={19}>
          <rect width="19" height="19" rx="3" fill="#f4c534" />
          <path d="M6 0H13L19 19H13L9.500 8L6 19H0Z" fill="#221c12" />
        </Icon>
        <b>设计 1*</b>
        <button aria-label="关闭文档"><Icon w={10}><Ink c="#66646a" w={2.400} d="M1 1L9 9M9 1L1 9" /></Icon></button>
      </DocTab>
      <DocNav>
        <button aria-label="上一个文档"><Icon w={8} h={12}><Ink c="#444" w={1} d="M6.500 1L1.500 6L6.500 11Z" /></Icon></button>
        <button aria-label="下一个文档"><Icon w={8} h={12}><Ink c="#444" w={1} d="M1.500 1L6.500 6L1.500 11Z" /></Icon></button>
        <button aria-label="关闭"><Icon w={10}><Ink c="#444" w={1.500} d="M0.500 0.500L9.500 9.500M9.500 0.500L0.500 9.500" /></Icon></button>
      </DocNav>
    </DocBar>
  </DesignArea>
);

/* ---------- status bar ---------- */

const StatusBar = styled.footer`
  display: flex;
  align-items: center;
  height: 40px;
  margin-bottom: 4px;
  background: ${BLUE};
  color: #fff;
  font-size: 14px;
`;

const StatusText = styled.span`
  flex: 1;
  padding-left: 10px;
`;

const StatusCell = styled.div`
  display: flex;
  align-items: center;
  justify-content: center;
  gap: 7px;
  width: ${(p) => p.$w}px;
  height: 30px;
  border-left: 1px solid #7da0bf;
`;

const StatusTools = styled.div`
  display: flex;
  align-items: center;
  padding-right: 22px;
`;

const Slot = styled.button`
  width: ${(p) => p.$w}px;
  height: 30px;
`;

const SKY = "#7ebdf2";
const WhiteCursor = () => (
  <path d="M1 1V16L4.500 13L7.500 19L10.500 17.500L7.500 12H12Z" fill="#fff" stroke="#25394c" />
);

const Status = () => (
  <StatusBar>
    <StatusText>拉动 1 个面</StatusText>
    <StatusCell $w={114} />
    <StatusCell $w={45}>
      <Icon w={16}><circle cx="8" cy="8" r="7.500" fill="#fff" /><Ink c={BLUE} w={3} d="M8 7V13" /><circle cx="8" cy="4" r="1.700" fill={BLUE} /></Icon>
      <Caret up color="#fff" h={5} />
    </StatusCell>
    <StatusCell $w={115} />
    <StatusCell $w={172}>1 面</StatusCell>
    <StatusTools>
      <Slot $w={20} aria-label="选择步进"><Icon w={12} h={24}><path d="M0 9L6 2L12 9Z" fill={SKY} /><path d="M0 16L6 23L12 16Z" fill="#7d8b98" /></Icon></Slot>
      <Slot $w={32} aria-label="还原选择"><Icon w={20}><Ink c={SKY} w={3} d="M11 3C20 2 20 11 13 16" /><path d="M9 3L15 -1V7Z" fill={SKY} /><WhiteCursor /></Icon></Slot>
      <Slot $w={26} aria-label="选择方式"><Icon w={14} h={20}><WhiteCursor /></Icon></Slot>
      <Slot $w={16} aria-label="选择方式列表"><Caret up color="#fff" h={5} /></Slot>
      <Slot $w={32} aria-label="框选"><Icon w={20} h={16}><Ink c={SKY} w={2} d="M1 4V1H4M7 1H13M16 1H19V4M19 6V10M19 12V15H16M13 15H7M4 15H1V12M1 10V6" /></Icon></Slot>
      <Slot $w={10} aria-label="框选列表"><Caret up color="#fff" h={5} /></Slot>
      <VRule $h={30} $m={3} />
      <Slot $w={26} aria-label="旋转视图"><Icon w={20}><Ink c={SKY} w={2.400} d="M2 12C6 6 14 6 18 12M8 2C14 4 13 13 8 18" /><path d="M0 7V14L5 13ZM20 7V14L15 13ZM6 0L13 1L9 6ZM5 19L12 19L8 14Z" fill={SKY} /></Icon></Slot>
      <Slot $w={12} aria-label="旋转列表"><Caret up color="#fff" h={5} /></Slot>
      <Slot $w={36} aria-label="平移"><Icon w={20}><Ink c={SKY} w={2} d="M10 2V18M2 10H18" /><path d="M10 0L6 5H14ZM10 20L6 15H14ZM0 10L5 6V14ZM20 10L15 6V14Z" fill={SKY} /></Icon></Slot>
      <Slot $w={24} aria-label="缩放"><Icon w={20}><Ink c={SKY} w={4} d="M12 12L18 18" /><circle cx="8" cy="8" r="7" fill="#fff" stroke="#c5e2fb" /></Icon></Slot>
      <Slot $w={14} aria-label="缩放列表"><Caret up color="#fff" h={5} /></Slot>
      <Slot $w={36} aria-label="上一视图"><Icon w={20} h={16}><Ink c={SKY} w={4} d="M19 3L8 10" /><path d="M0 14L5 5L11 14Z" fill={SKY} /></Icon></Slot>
      <Slot $w={24} disabled aria-label="下一视图"><Icon w={20} h={16}><Ink c="#748698" w={4} d="M1 13L12 6" /><path d="M20 2L15 11L9 2Z" fill="#748698" /></Icon></Slot>
    </StatusTools>
  </StatusBar>
);

export default function App() {
  return (
    <Page>
      <GlobalStyle />
      <Header />
      <Ribbon />
      <Workspace>
        <SidePanels />
        <Design />
      </Workspace>
      <Status />
    </Page>
  );
}
